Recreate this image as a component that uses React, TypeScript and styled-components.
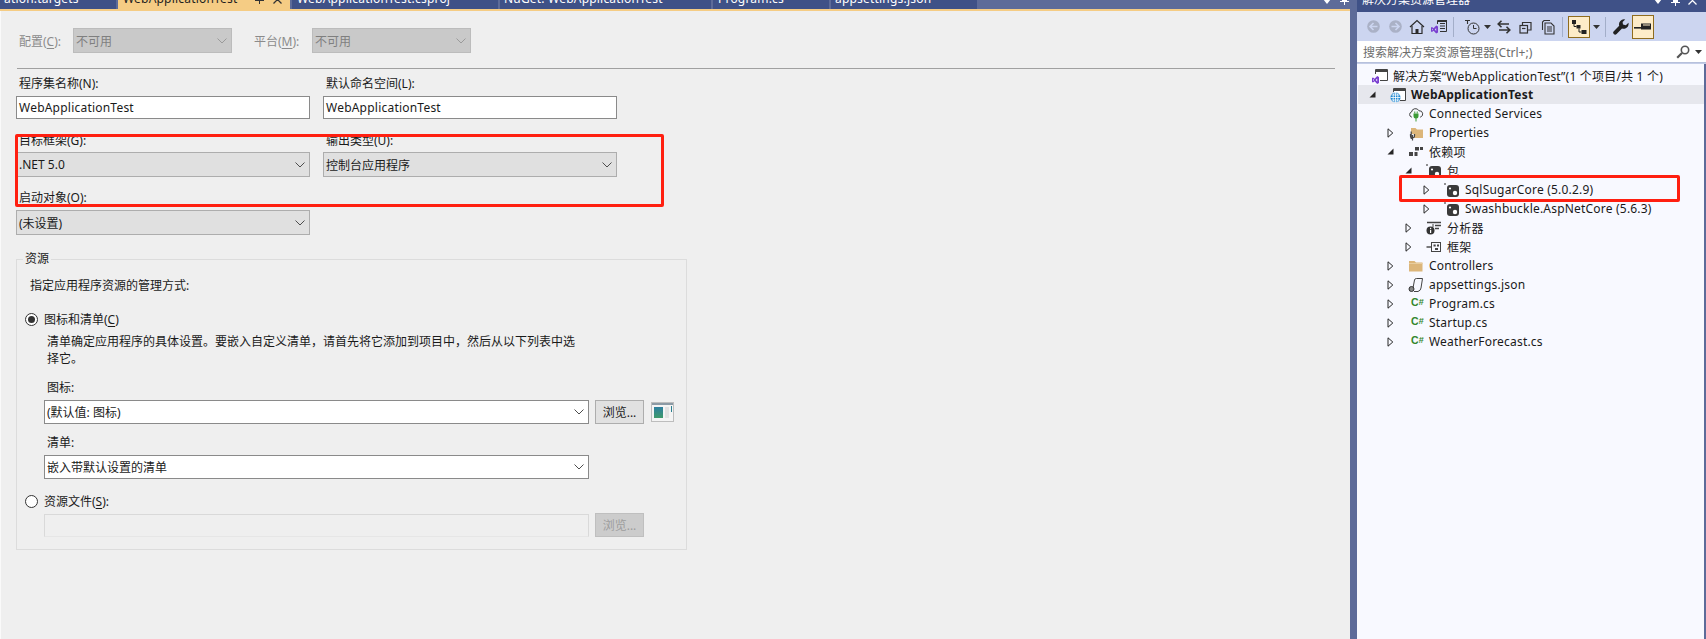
import React from "react";
import styled, { createGlobalStyle } from "styled-components";

const Global = createGlobalStyle`
  html, body { margin: 0; padding: 0; height: 639px; overflow: hidden; background: #efefef; }
  #root { height: 639px; }
  body { font-family: "Noto Sans", "Noto Sans CJK SC", sans-serif; font-size: 12px; color: #1a1a1a; }
`;

const Page = styled.div`
  position: relative;
  display: grid;
  grid-template-columns: 1350px 7px 349px;
  height: 639px;
  overflow: hidden;
`;
const Main = styled.div`display: flex; flex-direction: column; min-width: 0; height: 639px; background: #5d6b99;`;
const TabBar = styled.div`display: flex; height: 9px; flex: none; overflow: hidden; background: #5d6b99;`;
const Tab = styled.div<{ $w: number; $active?: boolean; $pad: number }>`
  flex: none; width: ${p => p.$w}px; height: 9px; margin-right: 2px; padding-left: ${p => p.$pad}px; box-sizing: border-box;
  display: flex; overflow: hidden; white-space: nowrap;
  background: ${p => (p.$active ? "#f5cc84" : "#3f5187")};
  color: ${p => (p.$active ? "#1e1e1e" : "#ffffff")};
`;
const TabLabel = styled.span`display: block; flex: 1; line-height: 16px; height: 16px; margin-top: -9px; letter-spacing: 0.2px;`;
const TabIcons = styled.span`display: flex; gap: 9px; padding-right: 8px; margin-top: -5px; flex: none;`;
const TabRight = styled.div`margin-left: auto; display: flex; gap: 9px; padding-right: 1px; align-items: flex-start;`;
const TabRightIcon = styled.span<{ $top: number }>`display: flex; margin-top: ${p => p.$top}px;`;
const Accent = styled.div`height: 2px; flex: none; background: #f5cc84;`;
const Panel = styled.div`
  flex: 1; background: #efefef; border-left: 1px solid #fafafa; padding: 17px 0 0 15px; box-sizing: border-box;
`;
const ConfigRow = styled.div`display: flex; align-items: center; height: 25px;`;
const ConfigLabel = styled.div<{ $w: number }>`
  width: ${p => p.$w}px; padding-left: 3px; box-sizing: border-box; color: #8b8b8b; flex: none;
`;
const Spacer = styled.div<{ $w: number }>`width: ${p => p.$w}px; flex: none;`;
const Divider = styled.div`height: 1px; width: 1318px; margin: 15px 0 0 1px; background: #a0a0a0;`;
const FieldGrid = styled.div`display: grid; grid-template-columns: 294px 294px; column-gap: 13px;`;
const Label = styled.div<{ $top: number }>`
  height: 16px; line-height: 16px; padding-left: 3px; margin-top: ${p => p.$top}px; white-space: nowrap;
`;
const Control = styled.div<{ $kind: "input" | "white" | "gray" | "off"; $h?: number; $w?: number; $top?: number; $latin?: boolean }>`
  box-sizing: border-box; display: flex; align-items: center; justify-content: space-between;
  height: ${p => p.$h ?? 25}px; width: ${p => (p.$w ? p.$w + "px" : "100%")}; margin-top: ${p => p.$top ?? 0}px;
  padding: 0 4px 0 2px; flex: none; white-space: nowrap;
  letter-spacing: ${p => (p.$latin ? "0.22px" : "0")};
  border: 1px solid ${p => ({ input: "#8a8a8a", white: "#8a8a8a", gray: "#adadad", off: "#bcbcbc" })[p.$kind]};
  background: ${p => ({ input: "#ffffff", white: "#ffffff", gray: "#e0e0e0", off: "#c9c9c9" })[p.$kind]};
  color: ${p => (p.$kind === "off" ? "#7f7f7f" : "#1a1a1a")};
`;
const Mnemonic = styled.span`text-decoration: underline; text-underline-offset: 2px;`;
const Chevron = ({ off }: { off?: boolean }) => (
  <svg width="10" height="6" viewBox="0 0 10 6" fill="none" stroke={off ? "#9a9a9a" : "#4d4d4d"} strokeWidth="1">
    <path d="M0.5 0.5 L5 5 L9.5 0.5" />
  </svg>
);
const Group = styled.fieldset`
  box-sizing: border-box; width: 671px; height: 299px; margin: 16px 0 0 0; padding: 0 0 0 8px;
  border: 1px solid #dcdcdc; min-width: 0;
`;
const Legend = styled.legend`margin-left: -2px; padding: 0 2px; line-height: 16px; height: 16px;`;
const Hint = styled.div`margin-top: 11px; padding-left: 5px; height: 16px; line-height: 16px;`;
const RadioRow = styled.div<{ $top: number }>`
  display: flex; align-items: center; gap: 6px; height: 16px; margin-top: ${p => p.$top}px;
`;
const Radio = styled.span<{ $on?: boolean }>`
  box-sizing: border-box; width: 13px; height: 13px; border-radius: 50%; border: 1px solid #333; background: #fff;
  display: flex; align-items: center; justify-content: center; flex: none;
  &::after { content: ""; width: 7px; height: 7px; border-radius: 50%; background: ${p => (p.$on ? "#333" : "transparent")}; }
`;
const Indented = styled.div`padding-left: 19px;`;
const Desc = styled.div`
  width: 530px; padding-left: 3px; margin-top: 6px; line-height: 17px;
`;
const ControlRow = styled.div<{ $top: number }>`
  display: flex; align-items: center; height: 24px; margin-top: ${p => p.$top}px;
`;
const Browse = styled.div<{ $off?: boolean }>`
  box-sizing: border-box; width: 49px; height: 24px; margin-left: 6px; flex: none;
  display: flex; align-items: center; justify-content: center;
  border: 1px solid ${p => (p.$off ? "#bfbfbf" : "#adadad")};
  background: ${p => (p.$off ? "#cccccc" : "#e1e1e1")};
  color: ${p => (p.$off ? "#9d9d9d" : "#1a1a1a")};
`;
const DisabledField = styled.div`
  box-sizing: border-box; width: 545px; height: 23px; flex: none; background: #efefef;
  border: 1px solid #d9d9d9; border-bottom-color: #e6e6e6;
`;
const IconSlot = styled.div`margin-left: 7px; width: 23px; height: 20px; flex: none; display: flex;`;
const RedBox = styled.div<{ $x: number; $y: number; $w: number; $h: number }>`
  position: absolute; left: ${p => p.$x}px; top: ${p => p.$y}px; width: ${p => p.$w}px; height: ${p => p.$h}px;
  box-sizing: border-box; border: 3px solid #ff1f10; border-radius: 2px; pointer-events: none;
`;

/* right side */
const Gutter = styled.div`background: #5d6b99;`;
const Side = styled.div`display: flex; flex-direction: column; min-width: 0; height: 639px; background: #f8f9ff;`;
const SideTitle = styled.div`
  height: 12px; flex: none; overflow: hidden; background: #3f5187; color: #fff; display: flex; padding-left: 5px; white-space: nowrap;
`;
const SideTitleText = styled.span`display: block; line-height: 16px; height: 16px; margin-top: -8px;`;
const SideTitleIcons = styled.div`margin-left: auto; display: flex; gap: 3px; padding-right: 7px;`;
const TitleIcon = styled.span<{ $top: number }>`width: 14px; height: 12px; margin-top: ${p => p.$top}px; display: flex; align-items: flex-start; justify-content: center;`;
const Toolbar = styled.div`
  height: 29px; flex: none; box-sizing: border-box; display: flex; align-items: center; padding-left: 5px; background: #ccd5f0;
`;
const Tool = styled.div<{ $w?: number; $active?: boolean; $tall?: boolean }>`
  box-sizing: border-box; width: ${p => p.$w ?? 22}px; height: ${p => (p.$tall ? "24px" : "22px")}; flex: none;
  display: flex; align-items: center; justify-content: center;
  ${p => p.$active && "background: #fdecc8; border: 1px solid #8f6c1e;"}
`;
const ToolSep = styled.div<{ $l: number; $r: number }>`
  width: 1px; height: 20px; background: #a3aec9; margin: 0 ${p => p.$r}px 0 ${p => p.$l}px; flex: none;
`;
const SearchBar = styled.div`
  height: 21px; flex: none; margin-left: 1px; padding: 0 4px 0 5px; display: flex; align-items: center; justify-content: space-between;
  background: #ffffff; color: #6d6d6d;
`;
const SearchEnd = styled.div`display: flex; align-items: center; gap: 5px;`;
const SearchRule = styled.div`height: 2px; flex: none; background: #c5cee8; border-top: 1px solid #b7c1dc; box-sizing: border-box;`;
const Tree = styled.div`flex: 1; padding-top: 2px; margin-left: 1px; border-right: 2px solid #5d6b99;`;
const Row = styled.div<{ $indent: number; $selected?: boolean; $bold?: boolean }>`
  display: flex; align-items: center; height: 19px; padding-left: ${p => p.$indent}px; white-space: nowrap;
  background: ${p => (p.$selected ? "#e6e7ed" : "transparent")};
  font-weight: ${p => (p.$bold ? 700 : 400)};
  letter-spacing: 0.2px;
  color: #1a1a1a;
`;
const Expander = styled.span`width: 18px; height: 19px; flex: none; display: flex; align-items: center; justify-content: center;`;
const RowIcon = styled.span`width: 16px; height: 16px; margin: 0 5px 0 9px; flex: none; display: flex;`;

const Open = () => (
  <svg width="7" height="7" viewBox="0 0 7 7"><path d="M6.5 0.5 V6.5 H0.5 Z" fill="#262626" /></svg>
);
const Closed = () => (
  <svg width="7" height="10" viewBox="0 0 7 10"><path d="M1 0.8 L5.8 5 L1 9.2 Z" fill="none" stroke="#262626" /></svg>
);

const VsMark = ({ x = 0, y = 0 }: { x?: number; y?: number }) => (
  <path transform={`translate(${x} ${y})`} fill="#7a3fd0"
    d="M5.2 0 L7 1 V7 L5.2 8 L2.6 5.3 L1 6.5 L0 6 V2 L1 1.5 L2.6 2.7 Z M5.2 2.4 L3.8 4 L5.2 5.6 Z M1 3 V5 L2 4 Z" />
);
const SolutionIcon = () => (
  <svg width="16" height="16" viewBox="0 0 16 16">
    <path d="M3.5 6 V1.5 H15.5 V12.5 H8" fill="#fff" stroke="#444" />
    <rect x="4" y="2" width="11" height="2" fill="#444" />
    <VsMark x={0} y={8} />
  </svg>
);
const WebIcon = () => (
  <svg width="16" height="16" viewBox="0 0 16 16">
    <path d="M3.5 5 V1.5 H15.5 V13.5 H10" fill="#fff" stroke="#444" />
    <rect x="4" y="2" width="11" height="2" fill="#444" />
    <circle cx="5.5" cy="10.5" r="5" fill="#1e88d2" />
    <path d="M0.5 10.5 H10.5 M5.5 5.5 V15.5 M1.5 8 H9.5 M1.5 13 H9.5" stroke="#fff" strokeWidth="0.8" />
    <ellipse cx="5.5" cy="10.5" rx="2.4" ry="5" fill="none" stroke="#fff" strokeWidth="0.8" />
  </svg>
);
const CloudIcon = () => (
  <svg width="16" height="16" viewBox="0 0 16 16" fill="none">
    <path d="M4 11 H3.5 A2.6 2.6 0 0 1 3.5 6 A4 4 0 0 1 11 4.8 A3.2 3.2 0 0 1 12.5 11 H12" stroke="#444" />
    <path d="M5.5 7.5 H10.5 V10 A2.5 2.5 0 0 1 5.5 10 Z" fill="#3c9b37" />
    <path d="M6.8 5.5 V7.5 M9.2 5.5 V7.5 M8 12 V15.5" stroke="#3c9b37" />
  </svg>
);
const FolderIcon = () => (
  <svg width="16" height="16" viewBox="0 0 16 16">
    <path d="M1 3 H6.5 L8 4.5 H14.5 V13.5 H1 Z" fill="#dcb67a" />
    <rect x="1" y="5" width="13.5" height="1" fill="#e8cd9e" />
  </svg>
);
const PropsIcon = () => (
  <svg width="16" height="16" viewBox="0 0 16 16">
    <path d="M3 3 H7.5 L9 4.5 H15 V13 H3 Z" fill="#dcb67a" />
    <path d="M2.5 9 V11 A2 2 0 0 0 6.5 11 V9 M3.2 6.5 V14 M4.5 10 V15.5" fill="#efefef" stroke="#444" strokeWidth="1.2" />
  </svg>
);
const DepsIcon = () => (
  <svg width="16" height="16" viewBox="0 0 16 16" fill="#444">
    <rect x="1" y="8" width="4" height="4" /><rect x="6.5" y="8" width="3" height="4" /><rect x="7" y="3" width="4" height="3.5" />
    <rect x="12" y="3" width="3" height="3" />
  </svg>
);
const PackageIcon = () => (
  <svg width="16" height="16" viewBox="0 0 16 16">
    <path d="M1 1 V3 M0 2 H2" stroke="#555" strokeWidth="0.8" />
    <rect x="3" y="3" width="12" height="12" rx="3" fill="#3a3a3a" />
    <circle cx="11" cy="11" r="2.2" fill="#fff" />
    <circle cx="6" cy="6.5" r="1.1" fill="#fff" />
  </svg>
);
const AnalyzerIcon = () => (
  <svg width="16" height="16" viewBox="0 0 16 16">
    <path d="M1 2.5 H15 M9 5.5 H15 M9 8.5 H13" stroke="#444" strokeWidth="1.4" />
    <path d="M7 4 V7" stroke="#444" />
    <circle cx="4.5" cy="10.5" r="4" fill="#333" />
    <rect x="4" y="7.8" width="1.2" height="1.2" fill="#fff" />
    <rect x="4" y="9.8" width="1.2" height="3.2" fill="#fff" />
  </svg>
);
const FrameworkIcon = () => (
  <svg width="16" height="16" viewBox="0 0 16 16" fill="none">
    <rect x="5.5" y="3.5" width="9" height="9" stroke="#444" />
    <rect x="7.5" y="5.5" width="2.2" height="2" fill="#444" />
    <rect x="11" y="5.5" width="2" height="2" fill="#444" />
    <rect x="9" y="9" width="3" height="2" fill="#444" />
    <path d="M0.5 8 H5" stroke="#444" strokeWidth="1.4" />
  </svg>
);
const JsonIcon = () => (
  <svg width="16" height="16" viewBox="0 0 16 16" fill="none" stroke="#444">
    <path d="M5 11 L6.5 3 Q6.8 1.5 8.5 1.5 H14.5 L13 11 Q12.8 13.5 10 14.5 H6" />
    <circle cx="3.5" cy="12" r="2.5" fill="#888" stroke="#333" />
  </svg>
);
const CsIcon = () => (
  <svg width="16" height="16" viewBox="0 0 16 16" fontFamily="Liberation Sans, sans-serif" fontWeight="700" fill="#33862b">
    <text x="3" y="10" fontSize="10.5">C<tspan fontSize="9" dy="-1">#</tspan></text>
  </svg>
);

const ArrowDown = () => (
  <svg width="7" height="4" viewBox="0 0 7 4"><path d="M0 0 H7 L3.5 4 Z" fill="#333" /></svg>
);
const NavCircle = ({ dir }: { dir: "l" | "r" }) => (
  <svg width="13" height="13" viewBox="0 0 13 13">
    <circle cx="6.5" cy="6.5" r="6.3" fill="#aab1c6" />
    <path d={dir === "l" ? "M6.5 3 L3 6.5 L6.5 10 M3 6.5 H10.5" : "M6.5 3 L10 6.5 L6.5 10 M2.5 6.5 H10"} fill="none" stroke="#ccd5f0" strokeWidth="1.6" />
  </svg>
);
const HomeIcon = () => (
  <svg width="16" height="16" viewBox="0 0 16 16" fill="none" stroke="#2b2b2b" strokeWidth="1.2">
    <path d="M1 8 L8 1.5 L15 8" />
    <path d="M3 7 V14.5 H13 V7" />
    <rect x="6.5" y="10" width="3" height="4.5" fill="#2b2b2b" stroke="none" />
  </svg>
);
const SwitchViewIcon = () => (
  <svg width="16" height="16" viewBox="0 0 16 16">
    <path d="M6.5 5 V1.5 H15.5 V12.5 H9" fill="none" stroke="#333" />
    <rect x="7" y="1" width="9" height="2" fill="#333" />
    <path d="M9 4.5 H14 M9 7 H14 M9 9.5 H14" stroke="#333" />
    <VsMark x={0} y={6.5} />
  </svg>
);
const HistoryIcon = () => (
  <svg width="16" height="16" viewBox="0 0 16 16" fill="none" stroke="#333">
    <circle cx="9.5" cy="9.5" r="5.5" />
    <path d="M9.5 6 V9.5 H12.5" />
    <path d="M1 1.5 H6 M3.5 1.5 V5" strokeWidth="1.1" />
  </svg>
);
const SyncIcon = () => (
  <svg width="14" height="14" viewBox="0 0 14 14" fill="none" stroke="#333" strokeWidth="1.6">
    <path d="M1 4 H12 M4.5 0.8 L1.2 4 L4.5 7.2" />
    <path d="M13 10 H2 M9.5 6.8 L12.8 10 L9.5 13.2" />
  </svg>
);
const CollapseIcon = () => (
  <svg width="14" height="14" viewBox="0 0 14 14" fill="none" stroke="#333" strokeWidth="1.2">
    <rect x="1" y="5.5" width="7.5" height="7.5" />
    <path d="M3.5 5 V2.5 H12 V10 H9" />
    <path d="M3 8.5 H6.5" />
  </svg>
);
const CopiesIcon = () => (
  <svg width="16" height="16" viewBox="0 0 16 16" fill="none" stroke="#333" strokeWidth="1.1">
    <path d="M2.5 11 V3 L4 1.5 H10" />
    <path d="M5 4 H11 L14 7 V15 H5 Z" fill="#ccd5f0" />
    <path d="M7 8 H12 M7 10 H12 M7 12 H12" />
  </svg>
);
const TreeViewIcon = () => (
  <svg width="16" height="16" viewBox="0 0 16 16" fill="#222">
    <rect x="1" y="1" width="4" height="4" />
    <rect x="5.5" y="6" width="4" height="3.5" />
    <rect x="10.5" y="11" width="5" height="4" />
    <path d="M3 5 V7.5 H5.5 M8 9.5 V13 H10.5" fill="none" stroke="#222" />
  </svg>
);
const WrenchIcon = () => (
  <svg width="16" height="16" viewBox="0 0 16 16">
    <path d="M15.5 3.8 L12.8 6.2 L10 5.6 L9.6 2.9 L12.2 0.5 A5 5 0 0 0 6.2 6.8 L0.8 12.2 A1.9 1.9 0 0 0 3.6 15 L9 9.5 A5 5 0 0 0 15.5 3.8 Z" fill="#222" />
  </svg>
);
const PinIcon = () => (
  <svg width="18" height="8" viewBox="0 0 18 8" fill="#222">
    <rect x="0" y="4" width="7" height="1.6" />
    <rect x="7" y="0.5" width="10" height="6" />
    <rect x="9" y="1.5" width="7" height="1" fill="#fdecc8" />
  </svg>
);
const MagnifierIcon = () => (
  <svg width="14" height="14" viewBox="0 0 14 14" fill="none" stroke="#555" strokeWidth="1.6">
    <circle cx="9" cy="5" r="3.7" />
    <path d="M6 8 L1.2 12.8" strokeWidth="2.2" />
  </svg>
);
const AppIconPreview = () => (
  <svg width="23" height="20" viewBox="0 0 23 20">
    <rect x="0.5" y="0.5" width="22" height="19" fill="#f4f4f4" stroke="#bdbdbd" />
    <rect x="1" y="1" width="21" height="2" fill="#8c9aa5" />
    <defs>
      <linearGradient id="ap" x1="0" y1="0" x2="0" y2="1">
        <stop offset="0" stopColor="#2d7fa0" /><stop offset="1" stopColor="#3f9a6a" />
      </linearGradient>
    </defs>
    <rect x="3" y="5" width="9" height="11" fill="url(#ap)" />
    <rect x="14" y="5" width="4" height="11" fill="#e2e2e2" />
    <rect x="20" y="4" width="1" height="6" fill="#2a7f8f" />
  </svg>
);
const SmallPin = ({ color = "#fff" }: { color?: string }) => (
  <svg width="9" height="9" viewBox="0 0 9 9" fill={color}><rect x="2" y="0" width="5" height="5" /><rect x="0" y="5" width="9" height="1" /><rect x="4" y="6" width="1" height="3" /></svg>
);
const SmallTri = () => (
  <svg width="8" height="5" viewBox="0 0 8 5"><path d="M0 0 H8 L4 5 Z" fill="#fff" /></svg>
);
const SmallX = ({ color = "#fff" }: { color?: string }) => (
  <svg width="9" height="9" viewBox="0 0 9 9" fill="none" stroke={color} strokeWidth="1.3"><path d="M0.5 0.5 L8.5 8.5 M8.5 0.5 L0.5 8.5" /></svg>
);

type TabDef = { text: string; w: number; pad: number; active?: boolean };
const tabs: TabDef[] = [
  { text: "ation.targets", w: 116, pad: 4 },
  { text: "WebApplicationTest", w: 172, pad: 5, active: true },
  { text: "WebApplicationTest.csproj", w: 206, pad: 5 },
  { text: "NuGet: WebApplicationTest", w: 211, pad: 4 },
  { text: "Program.cs", w: 116, pad: 5 },
  { text: "appsettings.json", w: 146, pad: 4 },
];

type Node = { text: string; indent: number; open?: boolean; leaf?: boolean; flat?: boolean; icon: React.ReactNode; selected?: boolean };
const L = (level: number) => 5 + level * 18;
const nodes: Node[] = [
  { text: "解决方案“WebApplicationTest”(1 个项目/共 1 个)", indent: 5, flat: true, icon: <SolutionIcon /> },
  { text: "WebApplicationTest", indent: L(0), open: true, icon: <WebIcon />, selected: true },
  { text: "Connected Services", indent: L(1), leaf: true, icon: <CloudIcon /> },
  { text: "Properties", indent: L(1), icon: <PropsIcon /> },
  { text: "依赖项", indent: L(1), open: true, icon: <DepsIcon /> },
  { text: "包", indent: L(2), open: true, icon: <PackageIcon /> },
  { text: "SqlSugarCore (5.0.2.9)", indent: L(3), icon: <PackageIcon /> },
  { text: "Swashbuckle.AspNetCore (5.6.3)", indent: L(3), icon: <PackageIcon /> },
  { text: "分析器", indent: L(2), icon: <AnalyzerIcon /> },
  { text: "框架", indent: L(2), icon: <FrameworkIcon /> },
  { text: "Controllers", indent: L(1), icon: <FolderIcon /> },
  { text: "appsettings.json", indent: L(1), icon: <JsonIcon /> },
  { text: "Program.cs", indent: L(1), icon: <CsIcon /> },
  { text: "Startup.cs", indent: L(1), icon: <CsIcon /> },
  { text: "WeatherForecast.cs", indent: L(1), icon: <CsIcon /> },
];

export default function App() {
  return (
    <Page>
      <Global />
      <Main>
        <TabBar>
          {tabs.map(t => (
            <Tab key={t.text} $w={t.w} $pad={t.pad} $active={t.active}>
              <TabLabel>{t.text}</TabLabel>
              {t.active && (
                <TabIcons>
                  <SmallPin color="#333" />
                  <SmallX color="#333" />
                </TabIcons>
              )}
            </Tab>
          ))}
          <TabRight>
            <TabRightIcon $top={-1}><SmallTri /></TabRightIcon>
            <TabRightIcon $top={-4}><SmallPin /></TabRightIcon>
          </TabRight>
        </TabBar>
        <Accent />
        <Panel>
          <ConfigRow>
            <ConfigLabel $w={57}>配置(<Mnemonic>C</Mnemonic>):</ConfigLabel>
            <Control $kind="off" $w={159}>不可用<Chevron off /></Control>
            <Spacer $w={19} />
            <ConfigLabel $w={61}>平台(<Mnemonic>M</Mnemonic>):</ConfigLabel>
            <Control $kind="off" $w={159}>不可用<Chevron off /></Control>
          </ConfigRow>
          <Divider />
          <FieldGrid>
            <div>
              <Label $top={7}>程序集名称(N):</Label>
              <Control $kind="input" $latin $h={23} $top={4}>WebApplicationTest</Control>
            </div>
            <div>
              <Label $top={7}>默认命名空间(L):</Label>
              <Control $kind="input" $latin $h={23} $top={4}>WebApplicationTest</Control>
            </div>
            <div>
              <Label $top={14}>目标框架(G):</Label>
              <Control $kind="gray" $top={3}>.NET 5.0<Chevron /></Control>
            </div>
            <div>
              <Label $top={14}>输出类型(U):</Label>
              <Control $kind="gray" $top={3}>控制台应用程序<Chevron /></Control>
            </div>
            <div>
              <Label $top={13}>启动对象(O):</Label>
              <Control $kind="gray" $top={4}>(未设置)<Chevron /></Control>
            </div>
          </FieldGrid>
          <Group>
            <Legend>资源</Legend>
            <Hint>指定应用程序资源的管理方式:</Hint>
            <RadioRow $top={17}><Radio $on /><span>图标和清单(<Mnemonic>C</Mnemonic>)</span></RadioRow>
            <Indented>
              <Desc>清单确定应用程序的具体设置。要嵌入自定义清单，请首先将它添加到项目中，然后从以下列表中选择它。</Desc>
              <Label $top={13}>图标:</Label>
              <ControlRow $top={4}>
                <Control $kind="white" $h={24} $w={545}>(默认值: 图标)<Chevron /></Control>
                <Browse>浏览...</Browse>
                <IconSlot><AppIconPreview /></IconSlot>
              </ControlRow>
              <Label $top={11}>清单:</Label>
              <ControlRow $top={4}>
                <Control $kind="white" $h={24} $w={545}>嵌入带默认设置的清单<Chevron /></Control>
              </ControlRow>
            </Indented>
            <RadioRow $top={14}><Radio /><span>资源文件(<Mnemonic>S</Mnemonic>):</span></RadioRow>
            <Indented>
              <ControlRow $top={4}>
                <DisabledField />
                <Browse $off>浏览...</Browse>
              </ControlRow>
            </Indented>
          </Group>
        </Panel>
      </Main>
      <Gutter />
      <Side>
        <SideTitle>
          <SideTitleText>解决方案资源管理器</SideTitleText>
          <SideTitleIcons>
            <TitleIcon $top={-1}><SmallTri /></TitleIcon>
            <TitleIcon $top={-3}><SmallPin /></TitleIcon>
            <TitleIcon $top={-4}><SmallX /></TitleIcon>
          </SideTitleIcons>
        </SideTitle>
        <Toolbar>
          <Tool><NavCircle dir="l" /></Tool>
          <Tool><NavCircle dir="r" /></Tool>
          <Tool><HomeIcon /></Tool>
          <Tool><SwitchViewIcon /></Tool>
          <ToolSep $l={3} $r={7} />
          <Tool $w={21}><HistoryIcon /></Tool>
          <Tool $w={10}><ArrowDown /></Tool>
          <Tool $w={23}><SyncIcon /></Tool>
          <Tool><CollapseIcon /></Tool>
          <Tool><CopiesIcon /></Tool>
          <ToolSep $l={3} $r={5} />
          <Tool $active><TreeViewIcon /></Tool>
          <Tool $w={12}><ArrowDown /></Tool>
          <ToolSep $l={3} $r={4} />
          <Tool><WrenchIcon /></Tool>
          <Tool $active $tall><PinIcon /></Tool>
        </Toolbar>
        <SearchBar>
          <span>搜索解决方案资源管理器(Ctrl+;)</span>
          <SearchEnd><MagnifierIcon /><ArrowDown /></SearchEnd>
        </SearchBar>
        <SearchRule />
        <Tree>
          {nodes.map(n => (
            <Row key={n.text} $indent={n.indent} $selected={n.selected} $bold={n.selected}>
              {!n.flat && <Expander>{n.leaf ? null : n.open ? <Open /> : <Closed />}</Expander>}
              <RowIcon>{n.icon}</RowIcon>
              {n.text}
            </Row>
          ))}
        </Tree>
      </Side>
      <RedBox $x={15} $y={134} $w={649} $h={73} />
      <RedBox $x={1399} $y={175} $w={281} $h={27} />
    </Page>
  );
}
